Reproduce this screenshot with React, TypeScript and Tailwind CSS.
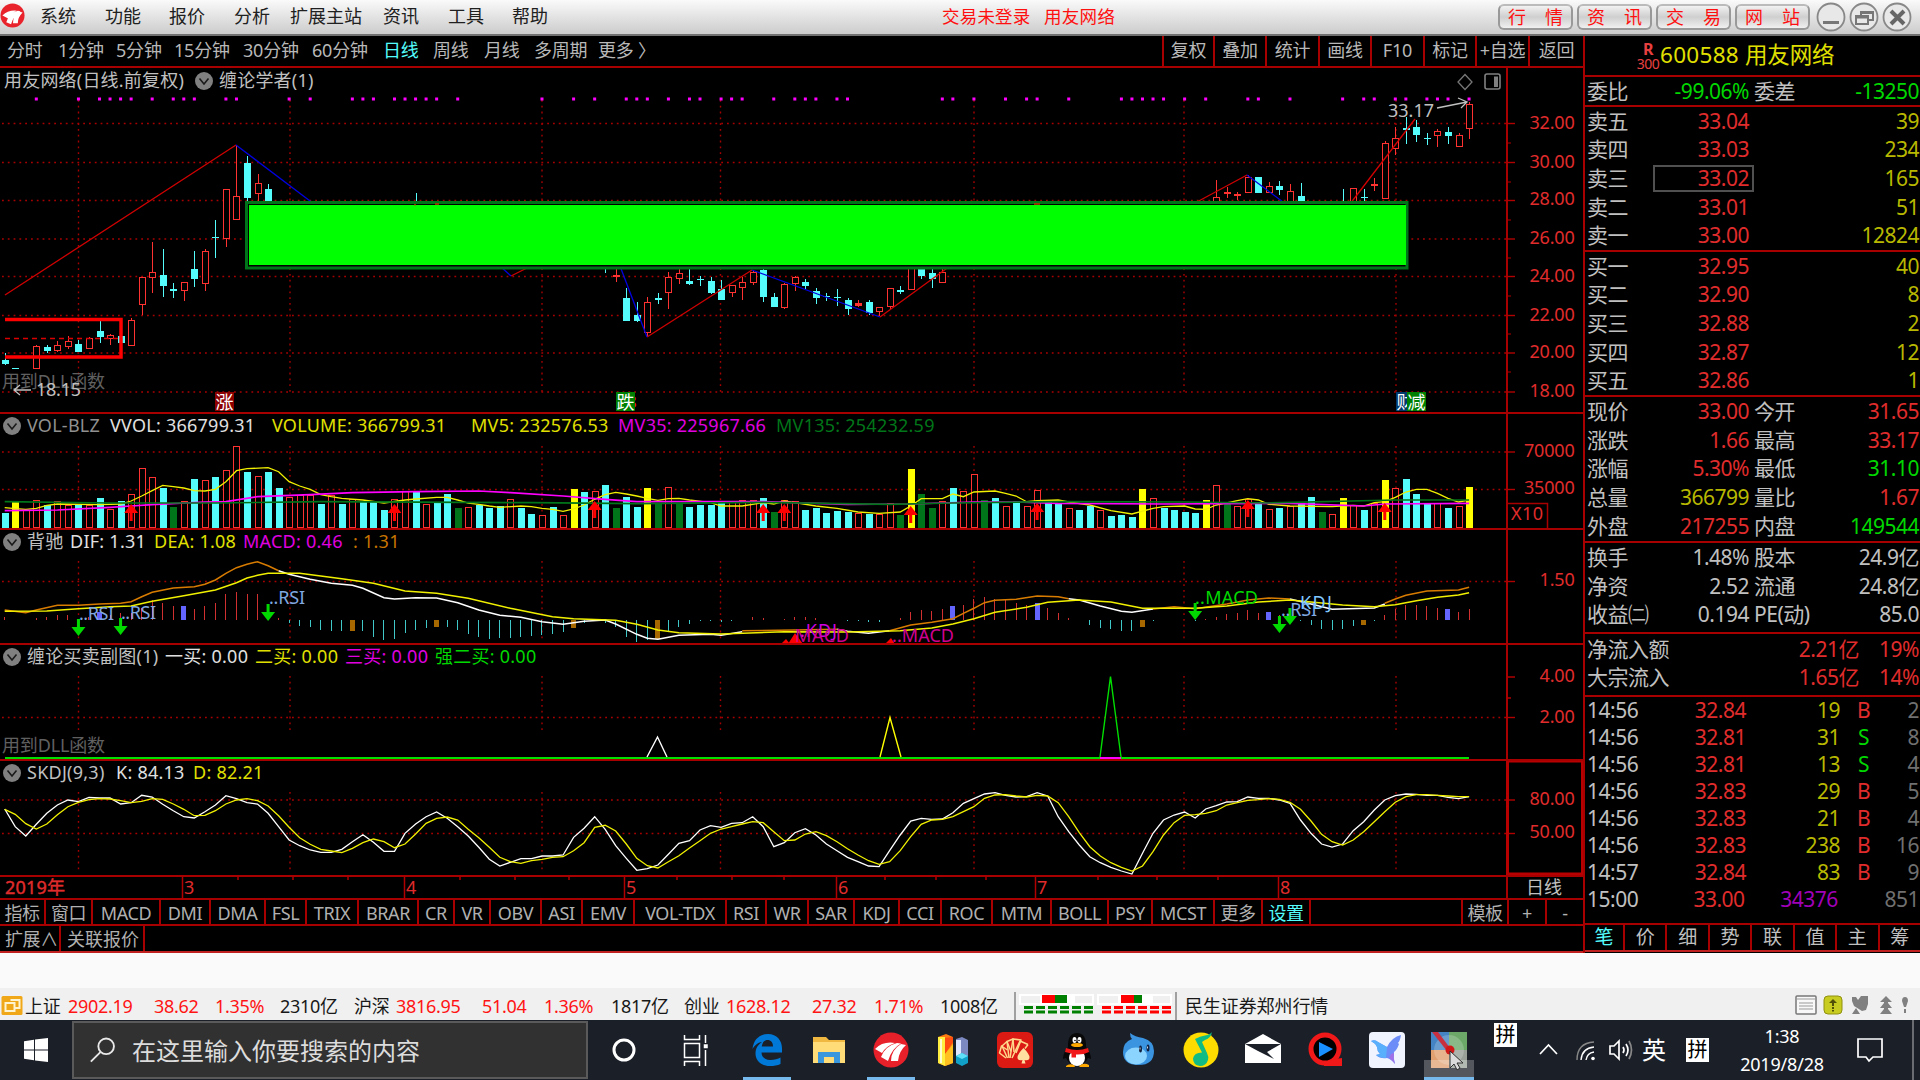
import type { ReactNode } from 'react'

type Pt = [number, number]
type Candle = [number, 'r' | 'c', number, number, number, number]

const RED = '#ff3232'
const CYAN = '#54fcfc'
const GREEN = '#007519'
const GRID = '#a80000'

// x of the n-th trading day
const day = (i: number) => 4.7 + i * 10.535

const MONTH_LINES = [78.5, 290, 542, 720.5, 974, 1184, 1396]

const MENUS = [
  ['系统', 'w-[65px]'], ['功能', 'w-[64px]'], ['报价', 'w-[65px]'], ['分析', 'w-[56px]'],
  ['扩展主站', 'w-[93px]'], ['资讯', 'w-[65px]'], ['工具', 'w-[64px]'], ['帮助', 'w-[430px]'],
]

const PERIODS = [
  ['分时', 'w-[51px]'], ['1分钟', 'w-[58px]'], ['5分钟', 'w-[58px]'], ['15分钟', 'w-[69px]'],
  ['30分钟', 'w-[69px]'], ['60分钟', 'w-[71px]'], ['日线', 'w-[50px] text-[#54fcfc]'], ['周线', 'w-[51px]'],
  ['月线', 'w-[50px]'], ['多周期', 'w-[64px]'], ['更多 〉', 'w-[60px]'],
]

const TOOLS = [
  ['复权', 'w-[51px]'], ['叠加', 'w-[52px]'], ['统计', 'w-[53px]'], ['画线', 'w-[52px]'],
  ['F10', 'w-[53px]'], ['标记', 'w-[52px]'], ['+自选', 'w-[53px]'], ['返回', 'w-[55px]'],
]

const INDICATORS = [
  ['指标', 'w-[46px]'], ['窗口', 'w-[47px]'], ['MACD', 'w-[68px]'], ['DMI', 'w-[50px]'], ['DMA', 'w-[55px]'],
  ['FSL', 'w-[41px]'], ['TRIX', 'w-[52px]'], ['BRAR', 'w-[60px]'], ['CR', 'w-[36px]'], ['VR', 'w-[36px]'],
  ['OBV', 'w-[51px]'], ['ASI', 'w-[41px]'], ['EMV', 'w-[52px]'], ['VOL-TDX', 'w-[92px]'], ['RSI', 'w-[40px]'],
  ['WR', 'w-[42px]'], ['SAR', 'w-[46px]'], ['KDJ', 'w-[45px]'], ['CCI', 'w-[42px]'], ['ROC', 'w-[51px]'],
  ['MTM', 'w-[59px]'], ['BOLL', 'w-[57px]'], ['PSY', 'w-[44px]'], ['MCST', 'w-[62px]'], ['更多', 'w-[48px]'],
  ['设置', 'w-[48px] text-[#54fcfc]'],
]

// day, colour, high, body top, body bottom, low
const CANDLES: Candle[] = [
  [0, 'c', 353, 360, 364, 365], [1, 'c', 368, 368, 369, 369], [3, 'r', 345, 346, 369, 369], [4, 'c', 345, 347, 351, 353],
  [5, 'r', 341, 345, 351, 352], [6, 'r', 336, 341, 347, 349], [7, 'c', 340, 344, 352, 352], [8, 'r', 337, 338, 349, 349],
  [9, 'c', 320, 331, 337, 343], [10, 'r', 334, 335, 339, 345], [11, 'c', 336, 336, 343, 343], [12, 'r', 318, 320, 346, 346],
  [13, 'r', 277, 277, 305, 315], [14, 'r', 242, 272, 278, 293], [15, 'c', 249, 275, 286, 297], [16, 'c', 283, 289, 291, 298],
  [17, 'r', 282, 282, 291, 301], [18, 'c', 251, 269, 279, 287], [19, 'r', 249, 251, 284, 291], [20, 'c', 220, 237, 238, 258],
  [21, 'r', 189, 189, 239, 247], [22, 'r', 145, 196, 220, 220], [23, 'c', 156, 163, 198, 203], [24, 'r', 174, 183, 194, 202],
  [25, 'c', 184, 189, 205, 205], [39, 'c', 193, 205, 205, 205], [57, 'c', 265, 265, 268, 273], [58, 'r', 267, 275, 277, 282],
  [59, 'c', 288, 298, 321, 321], [60, 'c', 302, 315, 321, 322], [61, 'r', 297, 302, 333, 337], [62, 'c', 293, 298, 300, 304],
  [63, 'r', 272, 277, 293, 309], [64, 'r', 265, 273, 279, 284], [65, 'c', 269, 281, 284, 285], [66, 'c', 276, 279, 280, 286],
  [67, 'c', 277, 281, 293, 294], [68, 'c', 280, 289, 300, 300], [69, 'r', 285, 285, 293, 297], [70, 'r', 277, 282, 288, 300],
  [71, 'r', 270, 272, 283, 285], [72, 'c', 269, 270, 297, 302], [73, 'c', 293, 297, 307, 307], [74, 'r', 283, 284, 308, 309],
  [75, 'r', 276, 277, 284, 291], [76, 'c', 279, 282, 286, 289], [77, 'c', 288, 291, 298, 304], [78, 'c', 293, 296, 297, 301],
  [79, 'c', 289, 297, 298, 306], [80, 'c', 298, 300, 309, 315], [81, 'r', 300, 303, 306, 307], [82, 'c', 300, 302, 313, 315],
  [83, 'r', 307, 307, 312, 316], [84, 'r', 288, 288, 307, 309], [85, 'c', 286, 290, 292, 294], [86, 'r', 265, 265, 290, 290],
  [87, 'c', 265, 269, 276, 279], [88, 'c', 268, 273, 279, 288], [89, 'r', 267, 272, 283, 283], [115, 'r', 180, 197, 205, 205],
  [116, 'r', 187, 192, 194, 198], [117, 'r', 192, 194, 196, 200], [118, 'r', 175, 177, 193, 193], [119, 'c', 177, 177, 193, 193],
  [120, 'r', 182, 186, 193, 193], [121, 'c', 181, 186, 190, 195], [122, 'r', 184, 191, 205, 205], [123, 'c', 183, 196, 205, 205],
  [127, 'c', 189, 202, 205, 205], [128, 'r', 188, 188, 205, 205], [129, 'c', 189, 197, 198, 201], [130, 'r', 178, 184, 186, 191],
  [131, 'r', 141, 143, 199, 199], [132, 'r', 127, 138, 149, 155], [133, 'c', 117, 128, 130, 144], [134, 'c', 120, 127, 135, 142],
  [135, 'c', 133, 138, 139, 145], [136, 'r', 129, 131, 136, 147], [137, 'c', 127, 132, 136, 144], [138, 'r', 133, 135, 147, 147],
  [139, 'r', 102, 104, 129, 139],
]

const SIGNAL_DAYS = [
  3, 7, 9, 10, 11, 12, 14, 16, 17, 18, 21, 22, 27, 29, 33, 34, 35, 37, 38, 39, 40, 41, 43, 51, 54, 56, 59, 60, 61, 63, 65,
  66, 68, 69, 70, 73, 75, 76, 77, 79, 80, 89, 90, 92, 95, 97, 98, 101, 106, 107, 108, 109, 110, 112, 114, 118, 119, 122,
  127, 129, 130, 132, 133, 135, 136, 137, 139,
]

// r hollow red, c cyan, y yellow, g green; the number is three times the depth below y=400
const VOLUME =
  'c340 y306 r330 r300 c314 r304 r314 c316 r314 c294 r326 c303 r282 r205 r232 c263 g321 r303 c236 r240 c232 r210 r138 c217 r227 ' +
  'c217 c263 r290 r286 r286 c311 r284 c311 r296 c304 c304 c330 r296 r272 c276 r313 c306 c281 g325 r322 c316 c325 c319 r296 c325 ' +
  'c343 r345 c322 r345 y266 c276 r272 c254 g325 c290 c322 y263 g308 r260 g308 c321 c316 c316 c308 r306 r300 r300 c294 g335 r300 ' +
  'r304 c330 c325 c339 c333 c337 r339 c342 r342 r308 g344 y208 g281 g325 r304 c263 r273 r223 g300 c294 r318 c303 r318 r271 c300 ' +
  'c310 r325 c330 c317 r331 c348 c344 c352 y267 r295 c325 c330 c335 c339 y300 r255 g308 r318 r298 c306 r327 c325 r317 c308 c290 ' +
  'g335 r341 y295 r316 c330 r310 y240 r264 c236 c281 c310 r310 c325 r318 y262'

const MV5: Pt[] = [
  [0, 323], [1, 326], [2, 328], [3, 325], [4, 316], [5, 312], [9, 314], [11, 312], [12, 303], [13, 288], [14, 272], [15, 256],
  [16, 260], [17, 264], [18, 272], [19, 273], [20, 268], [21, 245], [22, 212], [23, 206], [25, 203], [26, 215], [27, 245],
  [28, 258], [29, 268], [30, 284], [31, 290], [32, 295], [34, 300], [36, 309], [38, 300], [39, 297], [41, 292], [42, 292],
  [43, 300], [44, 309], [45, 313], [46, 318], [47, 322], [49, 318], [50, 320], [51, 325], [52, 328], [53, 334], [54, 327],
  [55, 315], [56, 298], [57, 284], [58, 277], [59, 282], [60, 288], [61, 295], [62, 301], [63, 296], [64, 295], [65, 300],
  [67, 308], [68, 318], [70, 318], [72, 308], [73, 312], [74, 303], [75, 308], [77, 318], [79, 325], [81, 336], [83, 340],
  [85, 336], [86, 318], [87, 296], [89, 296], [90, 282], [91, 290], [92, 276], [94, 273], [95, 280], [96, 288], [97, 305],
  [98, 302], [100, 300], [101, 306], [103, 315], [105, 332], [107, 342], [109, 325], [110, 320], [112, 318], [113, 327],
  [114, 328], [115, 315], [117, 302], [118, 296], [119, 300], [120, 313], [122, 318], [126, 320], [128, 316], [129, 318],
  [130, 308], [131, 305], [132, 292], [133, 276], [134, 268], [135, 268], [136, 280], [137, 295], [138, 306], [139, 300],
]
const MV35: Pt[] = [
  [0, 332], [5, 330], [10, 322], [12, 318], [14, 314], [19, 306], [21, 305], [24, 290], [29, 284], [33, 278], [39, 275],
  [45, 273], [48, 278], [53, 288], [57, 298], [60, 305], [72, 305], [80, 313], [86, 312], [92, 306], [96, 306], [100, 310],
  [110, 312], [122, 310], [129, 318], [131, 312], [139, 310],
]
const MV135: Pt[] = [
  [0, 305], [10, 309], [20, 309], [30, 305], [50, 308], [60, 311], [72, 307], [84, 313], [90, 309], [100, 305], [112, 306],
  [120, 309], [132, 300], [139, 300],
]

const DIF: { color: string; points: Pt[] }[] = [
  {
    color: '#d87c00',
    points: [
      [0, 630], [2, 638], [3, 630], [5, 616], [7, 616], [9, 612], [11, 610], [12, 605], [13, 590], [14, 577], [16, 564],
      [18, 560], [19, 553], [20, 540], [21, 520], [22, 503], [23, 493], [24, 485], [25, 497], [26, 512],
    ],
  },
  {
    color: '#ffffff',
    points: [
      [26, 512], [27, 523], [29, 538], [31, 550], [33, 556], [34, 565], [36, 593], [37, 597], [39, 593], [41, 594], [43, 608],
      [45, 630], [47, 646], [49, 652], [51, 665], [53, 673], [55, 664], [57, 660], [58, 672], [60, 703], [61, 715], [62, 718],
      [64, 706], [67, 703], [68, 706], [70, 695],
    ],
  },
  { color: '#d87c00', points: [[70, 692], [75, 690], [79, 688]] },
  { color: '#ffffff', points: [[79, 688], [80, 694], [82, 700], [84, 692]] },
  {
    color: '#d87c00',
    points: [
      [84, 692], [86, 675], [88, 667], [90, 656], [91, 640], [92, 625], [93, 608], [94, 601], [96, 598], [98, 588],
      [100, 590], [101, 596],
    ],
  },
  { color: '#ffffff', points: [[101, 596], [102, 600], [104, 618], [106, 634], [107, 637], [109, 627]] },
  { color: '#d87c00', points: [[109, 627], [111, 620], [113, 626], [116, 612], [118, 600], [120, 594], [122, 597]] },
  { color: '#ffffff', points: [[122, 597], [124, 612], [126, 628], [130, 624], [131, 612]] },
  { color: '#d87c00', points: [[131, 610], [132, 597], [133, 586], [135, 573], [138, 570], [139, 562]] },
]
const DEA: Pt[] = [
  [0, 634], [4, 633], [7, 626], [10, 620], [12, 618], [14, 604], [17, 587], [20, 570], [22, 548], [23, 534], [24, 526],
  [25, 520], [28, 520], [32, 536], [35, 550], [38, 573], [41, 580], [44, 595], [48, 625], [52, 650], [54, 656], [58, 661],
  [60, 673], [62, 690], [64, 698], [68, 702], [74, 695], [80, 696], [85, 692], [88, 684], [90, 672], [92, 656], [94, 637],
  [97, 622], [99, 607], [102, 600], [105, 606], [108, 625], [113, 625], [116, 618], [119, 606], [122, 600], [124, 606],
  [127, 615], [130, 620], [132, 614], [134, 602], [136, 592], [138, 585], [139, 578],
]
const HIST: Pt[] = [
  [0, 650], [3, 655], [4, 650], [5, 645], [6, 645], [8, 650], [9, 635], [10, 645], [11, 640], [12, 640], [13, 625], [14, 600],
  [15, 610], [16, 618], [17, 618], [18, 628], [19, 618], [20, 610], [21, 582], [22, 576], [23, 582], [24, 582], [26, 655],
  [27, 670], [28, 678], [29, 682], [30, 690], [31, 693], [32, 693], [33, 693], [34, 693], [35, 712], [36, 720], [37, 716],
  [38, 700], [39, 690], [40, 684], [41, 680], [42, 682], [43, 690], [44, 703], [45, 710], [46, 716], [47, 715], [48, 715],
  [49, 711], [50, 708], [51, 705], [52, 702], [53, 697], [54, 685], [55, 668], [56, 664], [57, 668], [58, 680], [59, 710],
  [60, 725], [61, 720], [62, 716], [63, 692], [64, 680], [65, 672], [66, 664], [67, 664], [68, 665], [69, 664], [71, 650],
  [72, 655], [74, 656], [75, 650], [76, 650], [77, 655], [80, 664], [81, 664], [82, 667], [83, 667], [85, 655], [86, 636],
  [87, 630], [88, 632], [89, 627], [90, 618], [91, 615], [92, 596], [93, 591], [94, 597], [95, 600], [96, 608], [97, 615],
  [98, 608], [99, 625], [100, 640], [101, 655], [103, 675], [104, 684], [105, 688], [106, 692], [107, 692], [108, 680],
  [109, 664], [113, 664], [114, 656], [115, 650], [116, 641], [117, 640], [118, 631], [119, 640], [120, 636], [121, 645],
  [123, 664], [124, 675], [125, 686], [126, 690], [127, 686], [128, 677], [129, 675], [130, 664], [131, 645], [132, 627],
  [133, 615], [134, 615], [135, 618], [136, 624], [137, 627], [138, 636], [139, 627],
]
const TURNING_DAYS = [9, 17, 33, 41, 54, 62, 90, 98, 108, 120, 129, 137]

const K_LINE = [
  507, 560, 588, 553, 520, 495, 480, 485, 472, 474, 474, 492, 488, 466, 471, 493, 512, 530, 534, 515, 495, 467, 476, 488, 492,
  520, 560, 600, 617, 630, 637, 637, 628, 605, 584, 607, 634, 634, 580, 552, 530, 516, 535, 560, 588, 622, 658, 678, 667, 656,
  656, 648, 648, 645, 592, 565, 530, 568, 617, 655, 691, 686, 675, 643, 610, 602, 570, 557, 562, 550, 548, 530, 560, 620, 608,
  578, 566, 585, 612, 632, 652, 665, 678, 680, 632, 585, 543, 535, 538, 537, 518, 490, 476, 462, 458, 466, 471, 470, 458, 468,
  530, 575, 615, 650, 668, 682, 693, 702, 640, 580, 540, 525, 516, 534, 507, 497, 486, 485, 471, 475, 475, 480, 490, 540, 580,
  612, 621, 612, 572, 545, 510, 480, 467, 462, 463, 466, 466, 472, 476, 470,
]
const D_LINE = [
  508, 523, 551, 567, 552, 524, 500, 487, 479, 476, 477, 482, 488, 484, 476, 478, 492, 508, 527, 526, 512, 492, 480, 476, 482,
  498, 527, 562, 593, 613, 628, 633, 638, 625, 608, 597, 605, 623, 612, 582, 550, 535, 531, 540, 568, 593, 622, 652, 665, 670,
  662, 658, 652, 650, 632, 608, 562, 556, 573, 612, 655, 677, 684, 665, 647, 624, 602, 580, 567, 560, 552, 545, 548, 575, 602,
  600, 582, 575, 587, 605, 626, 645, 662, 673, 665, 632, 590, 553, 540, 538, 530, 515, 500, 475, 465, 464, 468, 471, 466, 468,
  488, 530, 578, 620, 648, 668, 682, 693, 678, 635, 585, 548, 526, 524, 520, 512, 495, 488, 481, 479, 476, 478, 487, 508, 543,
  583, 605, 615, 600, 575, 545, 515, 487, 470, 464, 464, 466, 468, 470, 470,
]

const path = (pts: Pt[], top: number) => pts.map(([i, y]) => `${day(i).toFixed(1)},${(top + y / 3).toFixed(1)}`).join(' ')

function Line({ pts, top, color, width = 1.3 }: { pts: Pt[]; top: number; color: string; width?: number }) {
  return <polyline points={path(pts, top)} fill="none" stroke={color} strokeWidth={width} />
}

function Grid({ rows, from, to }: { rows: number[]; from: number; to: number }) {
  return (
    <g stroke={GRID} strokeWidth="1.4">
      {rows.map((y) => (
        <g key={y}>
          <line x1="2" x2="1507" y1={y} y2={y} strokeDasharray="1.8 4" />
          <line x1="1507" x2="1515" y1={y} y2={y} stroke="#b00000" />
        </g>
      ))}
      {MONTH_LINES.map((x) => (
        <line key={x} x1={x} x2={x} y1={from} y2={to} strokeDasharray="1.8 4" />
      ))}
    </g>
  )
}

function Axis({ labels }: { labels: [string, number][] }) {
  return (
    <g fill="#e02c2c" fontSize="18" textAnchor="end" letterSpacing="-0.2">
      {labels.map(([text, y]) => (
        <text key={text} x="1574.5" y={y + 6}>{text}</text>
      ))}
    </g>
  )
}

function Toggle() {
  return (
    <svg viewBox="0 0 18 18" className="h-[18px] w-[18px] shrink-0">
      <circle cx="9" cy="9" r="9" fill="#808080" />
      <path d="M4.5 6.5 9 12l4.500-5.500" fill="none" stroke="#1a1a1a" strokeWidth="1.6" />
    </svg>
  )
}

function Panel({ header, box, height, children }: { header: string[][]; box: string; height: string; children: ReactNode }) {
  return (
    <section className="relative border-b-2 border-[#a80000]">
      <div className="absolute top-[-1px] left-[3px] flex h-[25px] items-center text-[18px] tracking-[0.25px] whitespace-nowrap">
        <Toggle />
        <div className="w-[6px]" />
        {header.map(([text, cls]) => (
          <span key={text} className={cls}>{text}</span>
        ))}
      </div>
      <svg viewBox={box} className={`block w-[1583px] ${height}`}>
        <line x1="1507" x2="1507" y1="0" y2="1000" stroke="#a80000" strokeWidth="2" />
        {children}
      </svg>
    </section>
  )
}

function Arrow({ x, y, down }: { x: number; y: number; down?: boolean }) {
  return down ? (
    <path d={`M${x - 1.500} ${y - 17}h3v8h5.500l-7 9-7-9h5.500z`} fill="#00d800" />
  ) : (
    <path d={`M${x} ${y}l-7 9h5.500v8h3v-8h5.500z`} fill="#ff0000" />
  )
}

function Badge({ x, fill, text }: { x: number; fill: string; text: string }) {
  return (
    <g>
      <rect x={x} y="392" width="19" height="19" fill={fill} />
      <text x={x + 0.5} y="408.500" fontSize="18" fill="#fff">{text}</text>
    </g>
  )
}

function PriceChart() {
  return (
    <section className="relative border-b-2 border-[#a80000]">
      <div className="absolute top-[-1px] left-[4px] flex h-[27px] items-center text-[18px] tracking-[0.2px] whitespace-nowrap text-[#c0c0c0]">
        <span className="w-[191px]">用友网络(日线.前复权)</span>
        <Toggle />
        <span className="ml-[6px]">缠论学者(1)</span>
      </div>
      <svg viewBox="0 68 1583 344" className="block h-[344px] w-[1583px]">
        <line x1="1507" x2="1507" y1="68" y2="412" stroke="#a80000" strokeWidth="2" />
        <Grid rows={[123.5, 162.5, 200.5, 239, 276.5, 315.5, 353, 392]} from={100} to={392} />
        {[143, 182, 220, 258, 296, 334, 372].map((y) => (
          <line key={y} x1="1507" x2="1511" y1={y} y2={y} stroke="#b00000" />
        ))}
        <Axis
          labels={[['32.00', 123], ['30.00', 162], ['28.00', 199], ['26.00', 238], ['24.00', 276], ['22.00', 315], ['20.00', 352], ['18.00', 391]]}
        />
        {SIGNAL_DAYS.map((i) => (
          <rect key={i} x={day(i) - 1.5} y="97.500" width="3" height="3" fill="#ff00ff" />
        ))}
        <g shapeRendering="crispEdges">
          {CANDLES.map(([i, c, high, top, bottom, low]) => {
            const x = Math.round(day(i))
            const color = c === 'r' ? RED : CYAN
            const solid = c === 'c' || bottom - top < 4
            return (
              <g key={i} stroke={color}>
                <line x1={x + 0.5} x2={x + 0.5} y1={high} y2={low} />
                {solid ? (
                  <rect x={x - 3} y={top} width="7" height={bottom - top} fill={color} stroke="none" />
                ) : (
                  <rect x={x - 2.5} y={top + 0.5} width="6" height={bottom - top - 1} fill="#000" />
                )}
              </g>
            )
          })}
        </g>
        <g fill="none" stroke="#d00000" strokeWidth="1.3">
          <path d="M5 295 236 145M647 337 752 270M880 317 950 266M1195 203 1247 175M1350 204 1415 119M511 276 531 266M393 265 398 268" />
          <path d="M236 145 314 204M620 266 647 337M752 270 880 317M1247 175 1287 205M500 266 511 276M388 264 394 267" stroke="#0000e0" />
        </g>
        <g fill="none" stroke="#ff0000">
          <path d="M5 319.500H121V357H5" strokeWidth="3.500" />
          <path d="M5 338.500H120" strokeWidth="1.500" strokeDasharray="5 4" stroke="#d80000" />
        </g>
        <rect x="246.500" y="202.500" width="1160.500" height="65.500" fill="#000" stroke={GREEN} strokeWidth="3" />
        <rect x="249" y="205" width="1157" height="60" fill="#00ff00" />
        <path d="M415 204v1.500M435 204h4M1034 204h6" stroke="#c03000" strokeWidth="1.500" />
        <g fontSize="18">
          <text x="2" y="388" fill="#606060" textLength="103">用到DLL函数</text>
          <text x="36" y="396" fill="#c0c0c0" textLength="45">18.15</text>
          <path d="M31 390H14m6-5-6 5 6 5" fill="none" stroke="#c0c0c0" strokeWidth="1.300" />
          <text x="1388" y="117" fill="#c0c0c0" textLength="46">33.17</text>
          <path d="M1437 108 1467 102m-9-4 9 4-6 6" fill="none" stroke="#c0c0c0" strokeWidth="1.300" />
        </g>
        <text x="627" y="408" fontSize="17" fill="#ff2020">8</text>
        <Badge x={215} fill="#8c0000" text="涨" />
        <Badge x={616} fill="#008000" text="跌" />
        <Badge x={1396} fill="#003a6c" text="财" />
        <Badge x={1407} fill="#008000" text="减" />
        <path d="M1465 74.500 1472 82l-7 7.500-7-7.500z" fill="none" stroke="#777" strokeWidth="1.300" />
        <rect x="1485" y="74" width="15" height="15" rx="2" fill="none" stroke="#808080" strokeWidth="1.600" />
        <rect x="1494" y="76.500" width="4" height="10.500" fill="#808080" />
      </svg>
    </section>
  )
}

function VolumePanel() {
  const fills: Record<string, string> = { c: CYAN, y: '#ffff00', g: GREEN }
  return (
    <Panel
      box="0 414 1583 114"
      height="h-[114px]"
      header={[
        ['VOL-BLZ', 'w-[83px] text-[#909090]'], ['VVOL: 366799.31', 'w-[162px] text-[#e0e0e0]'],
        ['VOLUME: 366799.31', 'w-[199px] text-[#e0e000]'], ['MV5: 232576.53', 'w-[147px] text-[#e0e000]'],
        ['MV35: 225967.66', 'w-[158px] text-[#e000e0]'], ['MV135: 254232.59', 'text-[#007519]'],
      ]}
    >
      <Grid rows={[452, 489.5]} from={446} to={528} />
      <Axis labels={[['70000', 451], ['35000', 488]]} />
      <g shapeRendering="crispEdges">
        {VOLUME.split(' ').map((v, i) => {
          const x = Math.round(day(i))
          const top = Math.round(400 + Number(v.slice(1)) / 3)
          return v[0] === 'r' ? (
            <rect key={i} x={x - 2.5} y={top + 0.5} width="6" height={527 - top} fill="#000" stroke={RED} />
          ) : (
            <rect key={i} x={x - 3} y={top} width="7" height={528 - top} fill={fills[v[0]]} />
          )
        })}
      </g>
      <Line pts={MV5} top={400} color="#f0f000" />
      <Line pts={MV35} top={400} color="#ff00ff" width={1.7} />
      <Line pts={MV135} top={400} color="#007519" width={1.7} />
      {[[12, 504], [37, 504], [56, 501], [72, 504], [74, 504], [86, 506], [98, 503], [118, 500], [131, 503]].map(([i, y]) => (
        <Arrow key={i} x={day(i)} y={y} />
      ))}
      <path d="M1507 503.500H1547.500V528" fill="none" stroke="#a80000" strokeWidth="1.500" />
      <text x="1511" y="520" fontSize="18" fill="#e02c2c" textLength="32">X10</text>
    </Panel>
  )
}

function MacdPanel() {
  return (
    <Panel
      box="0 530 1583 113"
      height="h-[113px]"
      header={[
        ['背驰', 'w-[43px] text-[#c0c0c0]'], ['DIF: 1.31', 'w-[84px] text-[#e0e0e0]'], ['DEA: 1.08', 'w-[89px] text-[#e0e000]'],
        ['MACD: 0.46', 'w-[110px] text-[#e000e0]'], [': 1.31', 'text-[#c87400]'],
      ]}
    >
      <Grid rows={[581.5]} from={561} to={642} />
      <Axis labels={[['1.50', 580]]} />
      <g shapeRendering="crispEdges">
        {HIST.map(([i, y]) => {
          const end = 400 + y / 3
          const up = end < 620
          const turn = TURNING_DAYS.includes(i)
          const w = turn ? 5 : 1
          const color = up ? (turn ? '#6464ff' : '#d03030') : turn ? '#a86800' : '#40c8c8'
          return <rect key={i} x={Math.round(day(i) - w / 2)} y={up ? end : 620} width={w} height={Math.abs(end - 620)} fill={color} />
        })}
      </g>
      {DIF.map((seg, n) => (
        <Line key={n} pts={seg.points} top={400} color={seg.color} width={1.5} />
      ))}
      <Line pts={DEA} top={400} color="#f0f000" width={1.5} />
      {[[7, 636], [11, 635], [25, 621], [113, 620], [121, 633], [122, 625]].map(([i, y]) => (
        <Arrow key={i} x={day(i)} y={y} down />
      ))}
      <path d="M781 644l5-5 4 5zM788 644l7-11 8 11zM885 644l6-6 4 6z" fill="#ff0000" />
      <g fontSize="18" fill="#80a8e0">
        <text x="79" y="620" textLength="35">..RSI</text>
        <text x="121" y="619" textLength="35">..RSI</text>
        <text x="269" y="604" textLength="36">..RSI</text>
        <text x="1281" y="616" textLength="36">..RSI</text>
        <text x="1300" y="609" textLength="32" fill="#80c8ff">KDJ</text>
        <text x="1195" y="604" textLength="63" fill="#00d800">..MACD</text>
        <text x="800" y="637" textLength="37" fill="#d000e0">.KDJ</text>
        <text x="795" y="642" textLength="54" fill="#d00090">MACD</text>
        <text x="892" y="642" textLength="62" fill="#d00090">..MACD</text>
      </g>
    </Panel>
  )
}

function ChanPanel() {
  return (
    <Panel
      box="0 645 1583 114"
      height="h-[114px]"
      header={[
        ['缠论买卖副图(1)', 'w-[138px] text-[#c0c0c0]'], ['一买: 0.00', 'w-[90px] text-[#e0e0e0]'],
        ['二买: 0.00', 'w-[90px] text-[#e0e000]'], ['三买: 0.00', 'w-[90px] text-[#e000e0]'], ['强二买: 0.00', 'text-[#00d800]'],
      ]}
    >
      <Grid rows={[717.5]} from={676} to={732} />
      <path d="M1507 677h8M1507 698h4" stroke="#b00000" strokeWidth="1.400" />
      <Axis labels={[['4.00', 676], ['2.00', 717]]} />
      <text x="2" y="752" fontSize="18" fill="#606060" textLength="103">用到DLL函数</text>
      <line x1="5" x2="1469" y1="758" y2="758" stroke="#00e000" strokeWidth="2" />
      <line x1="1100" x2="1121" y1="758" y2="758" stroke="#ff00ff" strokeWidth="2" />
      <g fill="none" strokeWidth="1.400">
        <path d="M647 757 657.500 737 667 757" stroke="#fff" />
        <path d="M880 757 890 717.500 901 757" stroke="#ffff00" />
        <path d="M1100 757 1110.500 676.500 1121 757" stroke="#00e000" />
      </g>
    </Panel>
  )
}

function SkdjPanel() {
  return (
    <Panel
      box="0 761 1583 114"
      height="h-[114px]"
      header={[
        ['SKDJ(9,3)', 'w-[89px] text-[#c0c0c0]'], ['K: 84.13', 'w-[77px] text-[#e0e0e0]'], ['D: 82.21', 'text-[#e0e000]'],
      ]}
    >
      <Grid rows={[800, 833.5]} from={792} to={872} />
      <Line pts={K_LINE.map((y, i): Pt => [i, y])} top={640} color="#ffffff" />
      <Line pts={D_LINE.map((y, i): Pt => [i, y])} top={640} color="#f0f000" />
      <rect x="1507.500" y="761" width="75" height="113" fill="none" stroke="#b80000" strokeWidth="3" />
      <Axis labels={[['80.00', 799], ['50.00', 832]]} />
    </Panel>
  )
}

function TimeAxis() {
  const months: [string, number][] = [['3', 182], ['4', 404], ['5', 624], ['6', 836], ['7', 1035], ['8', 1278]]
  const ticks = [238, 293, 348, 460, 515, 569, 677, 732, 784, 885, 936, 986, 1098, 1157, 1218]
  return (
    <svg
      viewBox="0 877 1583 21"
      className="box-content block h-[21px] w-[1583px] overflow-visible border-b-2 border-[#a80000]"
      fill="#e02c2c"
      fontSize="18"
    >
      <text x="5" y="894" textLength="60" stroke="#e02c2c" strokeWidth="0.400">2019年</text>
      {months.map(([m, x]) => (
        <g key={m}>
          <line x1={x + 0.5} x2={x + 0.5} y1="877" y2="898" stroke="#b00000" strokeWidth="1.500" />
          <text x={x + 2} y="894">{m}</text>
        </g>
      ))}
      {ticks.map((x) => (
        <line key={x} x1={x} x2={x} y1="877" y2="880" stroke="#b00000" strokeWidth="1.500" />
      ))}
      <line x1="1507" x2="1507" y1="877" y2="898" stroke="#a80000" strokeWidth="2" />
      <text x="1526" y="894" fill="#c0c0c0">日线</text>
    </svg>
  )
}

function TitleBar() {
  return (
    <header className="flex h-[36px] shrink-0 items-center border-b-2 border-[#707070] bg-gradient-to-b from-[#fafafa] to-[#cccccc] text-[18px] text-[#202020]">
      <svg viewBox="0 0 26 26" className="mb-[4px] h-[25px] w-[26px]">
        <circle cx="12.500" cy="13" r="12.500" fill="#e8232b" />
        <path d="M2 13Q8 7 17 8q-6 2-9 8zM6 20Q9 10 18 8l3 .5Q14 12 11 22zM13 21Q13 13 20 9l3 1q-5 5-5 11z" fill="#fff" />
      </svg>
      <div className="flex h-full pt-[3px] pl-[14px] whitespace-nowrap">
        {MENUS.map(([label, w]) => (
          <span key={label} className={w}>{label}</span>
        ))}
        <span className="w-[102px] text-[17.500px] tracking-[0.2px] text-[#ff1010]">交易未登录</span>
        <span className="w-[454px] text-[17.500px] tracking-[0.3px] text-[#ff1010]">用友网络</span>
      </div>
      <div className="flex gap-[4px]">
        {['行情', '资讯', '交易', '网站'].map((label) => (
          <div
            key={label}
            className="flex h-[26px] w-[75px] items-center justify-between rounded-[6px] border-2 border-[#999] border-t-[#bbb] bg-gradient-to-b from-[#f2f2f2] via-[#cfcfcf] to-[#f0f0f0] px-[8px] text-[18px] leading-none text-[#ff1010]"
          >
            <span>{label[0]}</span>
            <span>{label[1]}</span>
          </div>
        ))}
      </div>
      <svg viewBox="0 0 102 32" className="ml-[5px] h-[32px] w-[102px]" fill="none" stroke="#888" strokeWidth="1.800">
        <g fill="#e8e8e8">
          <circle cx="16" cy="16" r="13.500" />
          <circle cx="49" cy="16" r="13.500" />
          <circle cx="82" cy="16" r="13.500" />
        </g>
        <path d="M8 21.500h16" stroke="#777" strokeWidth="3" />
        <path d="M46 14v-3h12v8h-4M41 15h12v8H41zM41 16.500h12M46 12h12" stroke="#777" strokeWidth="2" />
        <path d="m76 10 13 13m0-13-13 13" stroke="#666" strokeWidth="4" />
      </svg>
    </header>
  )
}

function Toolbar() {
  return (
    <div className="flex h-[32px] justify-between border-b-2 border-[#a80000] text-[18px] leading-[29px] tracking-[-0.2px] whitespace-nowrap text-[#b8b8b8]">
      <div className="flex pl-[7px]">
        {PERIODS.map(([label, cls]) => (
          <span key={label} className={cls}>{label}</span>
        ))}
      </div>
      <div className="flex">
        {TOOLS.map(([label, cls]) => (
          <span key={label} className={`border-l-2 border-[#a80000] text-center ${cls}`}>{label}</span>
        ))}
      </div>
    </div>
  )
}

function IndicatorTabs() {
  return (
    <div className="text-[18px] leading-[26px] tracking-[-0.4px] whitespace-nowrap text-[#b0b0b0]">
      <div className="flex h-[26px] border-b-2 border-[#a80000]">
        {INDICATORS.map(([label, cls]) => (
          <span key={label} className={`border-r-2 border-[#a80000] text-center ${cls}`}>{label}</span>
        ))}
        <span className="flex-1" />
        <span className="w-[46px] border-l-2 border-[#a80000] text-center">模板</span>
        <span className="w-[38px] border-l-2 border-[#a80000] text-center">+</span>
        <span className="w-[38px] border-l-2 border-[#a80000] text-center">-</span>
      </div>
      <div className="flex h-[27px] border-b-2 border-[#c02020]">
        <span className="w-[61px] border-r-2 border-[#a80000] pl-[5px]">扩展∧</span>
        <span className="w-[84px] border-r-2 border-[#a80000] pl-[6px] tracking-normal">关联报价</span>
      </div>
    </div>
  )
}

const SELLS = [['卖五', '33.04', '39'], ['卖四', '33.03', '234'], ['卖三', '33.02', '165'], ['卖二', '33.01', '51'], ['卖一', '33.00', '12824']]
const BUYS = [['买一', '32.95', '40'], ['买二', '32.90', '8'], ['买三', '32.88', '2'], ['买四', '32.87', '12'], ['买五', '32.86', '1']]

const R = 'text-[#e02c2c]'
const G = 'text-[#00d800]'
const Y = 'text-[#b8b800]'
const W = 'text-[#c0c0c0]'

const QUOTE = [
  ['现价', '33.00', R, '今开', '31.65', R],
  ['涨跌', '1.66', R, '最高', '33.17', R],
  ['涨幅', '5.30%', R, '最低', '31.10', G],
  ['总量', '366799', Y, '量比', '1.67', R],
  ['外盘', '217255', R, '内盘', '149544', G],
]
const CAPITAL = [
  ['换手', '1.48%', W, '股本', '24.9亿', W],
  ['净资', '2.52', W, '流通', '24.8亿', W],
  ['收益㈡', '0.194', W, 'PE(动)', '85.0', W],
]
const TICKS = [
  ['14:56', '32.84', '19', 'B', '2'],
  ['14:56', '32.81', '31', 'S', '8'],
  ['14:56', '32.81', '13', 'S', '4'],
  ['14:56', '32.83', '29', 'B', '5'],
  ['14:56', '32.83', '21', 'B', '4'],
  ['14:56', '32.83', '238', 'B', '16'],
  ['14:57', '32.84', '83', 'B', '9'],
  ['15:00', '33.00', '34376', '', '851'],
]

function QuoteRow({ row }: { row: string[] }) {
  return (
    <div className="flex h-[28.600px] items-center">
      <span className="w-[66px]">{row[0]}</span>
      <span className={`w-[96px] text-right ${row[2]}`}>{row[1]}</span>
      <span className="w-[70px] pl-[5px]">{row[3]}</span>
      <span className={`flex-1 text-right ${row[5]}`}>{row[4]}</span>
    </div>
  )
}

function OrderRow({ row, boxed }: { row: string[]; boxed?: boolean }) {
  return (
    <div className="flex h-[28.600px] items-center">
      <span className="w-[66px]">{row[0]}</span>
      <span
        className={`flex h-[27px] w-[101px] items-center justify-end border-2 pr-[3px] text-[#e02c2c] ${boxed ? 'border-[#505050]' : 'border-transparent'}`}
      >
        {row[1]}
      </span>
      <span className="flex-1 text-right text-[#b8b800]">{row[2]}</span>
    </div>
  )
}

const SECTION = 'border-b-2 border-[#a80000] pl-[2px] pr-[1px]'

function QuotePanel() {
  return (
    <aside className="flex w-[337px] flex-col border-l-2 border-[#a80000] text-[21px] leading-none tracking-[-0.5px] whitespace-nowrap text-[#c0c0c0]">
      <div className="flex h-[41px] items-center border-b-2 border-[#a80000] pl-[51px]">
        <div className="flex w-[24px] flex-col items-center text-[14px] text-[#e84040]">
          <span className="text-[16px] font-bold">R</span>
          <span>300</span>
        </div>
        <span className="flex gap-[6px] text-[22.500px] tracking-[0.3px] text-[#e0e000]">
          <span>600588</span>
          <span className="tracking-[-0.2px]">用友网络</span>
        </span>
      </div>
      <div className={`h-[30px] ${SECTION}`}>
        <QuoteRow row={['委比', '-99.06%', G, '委差', '-13250', G]} />
      </div>
      <div className={`h-[145px] ${SECTION}`}>
        {SELLS.map((r) => <OrderRow key={r[0]} row={r} boxed={r[0] === '卖三'} />)}
      </div>
      <div className={`h-[145px] ${SECTION}`}>
        {BUYS.map((r) => <OrderRow key={r[0]} row={r} />)}
      </div>
      <div className={`h-[146px] pt-[0.500px] ${SECTION}`}>
        {QUOTE.map((r) => <QuoteRow key={r[0]} row={r} />)}
      </div>
      <div className={`h-[91px] pt-[0.500px] ${SECTION}`}>
        {CAPITAL.map((r) => <QuoteRow key={r[0]} row={r} />)}
      </div>
      <div className={`h-[63px] pt-px ${SECTION}`}>
        {[['净流入额', '2.21亿', '19%'], ['大宗流入', '1.65亿', '14%']].map((r) => (
          <div key={r[0]} className="flex h-[28.600px] items-center">
            <span>{r[0]}</span>
            <span className="flex-1 text-right text-[#e02c2c]">{r[1]}</span>
            <span className="w-[60px] text-right text-[#e02c2c]">{r[2]}</span>
          </div>
        ))}
      </div>
      <div className={`h-[228px] ${SECTION}`}>
        {TICKS.map(([time, price, vol, side, count], i) => (
          <div key={i} className="flex h-[27px] items-center">
            <span className="w-[60px]">{time}</span>
            <span className="w-[99px] text-right text-[#e02c2c]">{price}</span>
            <span className={`w-[94px] text-right ${side ? 'text-[#b8b800]' : 'text-[#a000b8]'}`}>{vol}</span>
            <span className={`w-[47px] text-center ${side === 'S' ? 'text-[#00d800]' : 'text-[#e02c2c]'}`}>{side}</span>
            <span className="flex-1 text-right text-[#707070]">{count}</span>
          </div>
        ))}
      </div>
      <div className="flex h-[27px] border-b-2 border-[#c02020] text-center text-[19px] leading-[25px] tracking-normal">
        <span className="w-[38px] text-[#54fcfc]">笔</span>
        {['价', '细', '势', '联', '值', '主', '筹'].map((c) => (
          <span key={c} className="flex-1 border-l-2 border-[#a80000]">{c}</span>
        ))}
      </div>
    </aside>
  )
}

const INDEXES = [
  ['上证', 'w-[43px]'], ['2902.19', 'w-[86px] text-[#ff1414]'], ['38.62', 'w-[61px] text-[#ff1414]'],
  ['1.35%', 'w-[65px] text-[#ff1414]'], ['2310亿', 'w-[74px]'], ['沪深', 'w-[42px]'], ['3816.95', 'w-[86px] text-[#ff1414]'],
  ['51.04', 'w-[62px] text-[#ff1414]'], ['1.36%', 'w-[67px] text-[#ff1414]'], ['1817亿', 'w-[73px]'], ['创业', 'w-[42px]'],
  ['1628.12', 'w-[86px] text-[#ff1414]'], ['27.32', 'w-[62px] text-[#ff1414]'], ['1.71%', 'w-[66px] text-[#ff1414]'],
  ['1008亿', 'w-[74px]'],
]

function Meter({ color, split, end }: { color: string; split: number; end: number }) {
  return (
    <svg viewBox="0 0 75 32" className="mr-[3px] h-[32px] w-[75px]">
      <rect width="75" height="11" y="6" fill="#fff" />
      <path d="M2 8h19v7H2zM56 8h17v7H56z" fill="#f0f0f0" />
      <rect x={split - 13} width="13" height="8" y="7" fill="#ff0000" />
      <rect x={split} width={end - split} height="8" y="7" fill="#008000" />
      {[0, 1, 2, 3, 4, 5].map((n) => (
        <path key={n} d={`M${5 + n * 12} 18h9v3h-9zM${5 + n * 12} 22.500h9v3h-9z`} fill={color} />
      ))}
    </svg>
  )
}

function StatusBar() {
  return (
    <div className="flex h-[32px] shrink-0 items-center bg-[#f0f0f0] text-[18px] tracking-[-0.3px] whitespace-nowrap text-[#181818]">
      <svg viewBox="0 0 24 22" className="mt-[3px] h-[22px] w-[25px]">
        <rect x="1" y="1" width="21" height="19" rx="1.500" fill="#f0a818" />
        <path d="M10 5h9v8h-4M5 8h9v8H5z" fill="none" stroke="#fff4d0" strokeWidth="2" />
      </svg>
      {INDEXES.map(([t, cls]) => (
        <span key={t} className={`pt-[5px] ${cls}`}>{t}</span>
      ))}
      <div className="mr-[3px] h-[28px] w-[2px] self-end bg-[#a0a0a0]" />
      <Meter color="#008000" split={36} end={48} />
      <Meter color="#ff0000" split={37} end={45} />
      <div className="mr-[8px] h-[28px] w-[2px] self-end bg-[#a0a0a0]" />
      <span className="flex-1 pt-[5px] tracking-[-0.1px]">民生证券郑州行情</span>
      <svg viewBox="0 0 125 22" className="mt-px h-[22px] w-[125px]">
        <rect x="1" y="2" width="20" height="18" rx="1" fill="#f8f8f8" stroke="#777" strokeWidth="1.500" />
        <path d="M1 5h20M4 9h14M4 12h14M4 15h14" stroke="#999" />
        <rect x="29" y="2" width="18" height="18" rx="4" fill="#c8cc20" stroke="#909010" />
        <path d="m38 5-4 4h3v3h2V9h3zM37 13h2v2h-2zM37 16h2v1.500h-2z" fill="#505008" />
        <path d="M57 3h4l2 3 3-4h7v8l-2 6-4 1-8-5-2-5zM61 14l-4 6h8z" fill="#808080" />
        <path d="m91 2-6 6h4v1l-4 5h4v1l-4 5h12l-4-5v-1h4l-4-5V8h4z" fill="#808080" />
        <path d="M110 3q3 0 3 4l-2 6h-2l-2-6q0-4 3-4zM109 15h2v4h-2z" fill="#808080" />
      </svg>
    </div>
  )
}

function Slot({ children, active }: { children: ReactNode; active?: boolean }) {
  return (
    <div className="relative flex h-full w-[62px] items-center justify-center">
      <svg viewBox="0 0 36 36" className="h-[36px] w-[36px]">{children}</svg>
      {active && <div className="absolute inset-x-[7px] bottom-0 h-[3px] bg-[#76b9ed]" />}
    </div>
  )
}

function TaskBar() {
  return (
    <footer className="flex h-[60px] shrink-0 items-stretch bg-[#1b1f28] text-white">
      <div className="flex w-[72px] items-center justify-center">
        <svg viewBox="0 0 24 24" className="h-[24px] w-[24px]" fill="#fff">
          <path d="M0 3.200 10 1.700V11.500H0zM11 1.600 24 0v11.500H11zM0 12.500h10v9.800L0 20.800zM11 12.500h13V24l-13-1.600z" />
        </svg>
      </div>
      <div className="my-px flex w-[516px] items-center border-2 border-[#5a5a5a] bg-[#313131] pl-[16px]">
        <svg viewBox="0 0 24 24" className="h-[26px] w-[25px]" fill="none" stroke="#e8e8e8" strokeWidth="1.800">
          <circle cx="15.500" cy="8.500" r="7.500" />
          <path d="M10 14 .8 23.200" />
        </svg>
        <span className="pt-[2px] pl-[17px] text-[24px] leading-none text-[#dcdcdc]">在这里输入你要搜索的内容</span>
      </div>
      <div className="flex w-[72px] items-center justify-center">
        <svg viewBox="0 0 24 24" className="h-[24px] w-[24px]" fill="none" stroke="#fff" strokeWidth="3">
          <circle cx="12" cy="12" r="10" />
        </svg>
      </div>
      <div className="flex w-[76px] items-center justify-center pr-[4px]">
        <svg viewBox="0 0 26 31" className="h-[31px] w-[26px]" fill="none" stroke="#fff" strokeWidth="1.500">
          <path d="M1.500 0v4.500h15V0M1.500 8.500h15v14h-15zM1.500 31v-4.500h15V31M22.500 0v8M22.500 15v16" />
          <rect x="21.500" y="10" width="2.500" height="2.500" fill="#fff" />
        </svg>
      </div>
      <Slot active>
        <path
          d="M3.500 17C4.500 7.500 10.500 2 19 2c9 0 14 6.500 14 14.500v4H12.500c.3 5 4 7.500 9 7.500 4 0 7.500-1 10-2.500v6.500c-3 1.500-6.500 2-10.500 2C12 34 6.500 28.500 6.500 21.500c0-5 2.500-9 6.500-11.500-4.500.5-7.500 3.500-9.500 7zm9.300-2.500H24c0-4-2-6.500-5.500-6.500s-5.200 3-5.700 6.500z"
          fill="#0078d7"
        />
      </Slot>
      <Slot>
        <path d="M2 5h13l3 3h16v23H2z" fill="#f0b840" />
        <path d="M2 10h32v21H2z" fill="#ffdc78" />
        <path d="M7 31V20h22v11h-6v-6H13v6z" fill="#3a96dd" />
      </Slot>
      <Slot active>
        <circle cx="18" cy="18" r="17.500" fill="#e8202a" />
        <path d="M2 17Q10 9 22 11 13 14 9 21zM8 25Q12 14 24 11l4 .5Q19 16 15 29zM18 29Q18 18 28 12l5 1q-7 6-8 16z" fill="#fff" />
      </Slot>
      <Slot>
        <path d="m3 5 8-3 7 3v26l-8 3-7-3z" fill="#ff7a10" />
        <path d="M3 5h7v29l-7-3z" fill="#ffee40" />
        <path d="M5 7h2v24H5z" fill="#fffbd0" />
        <path d="m10 6 8-1v5l-8 12z" fill="#ff4a10" />
        <path d="M10 22l8-10v19l-8 3z" fill="#ffc020" />
        <path d="m21 7 6-2 6 3v20H21z" fill="#7c88c0" />
        <path d="M21 8h5v20h-5z" fill="#dfe6ff" />
        <path d="m27 21 6 3v7l-6 3-6-3v-7z" fill="#10a0c8" />
        <path d="m27 21 6 3-6 3-6-3z" fill="#60e0f8" />
      </Slot>
      <Slot>
        <rect width="36" height="36" rx="6" fill="#dc1a14" />
        <g fill="none" stroke="#ffd88c" strokeWidth="1.500" strokeLinejoin="round">
          <path d="M9 26 2.500 21l2-7 6 4" />
          <path d="M10.500 26 5 14l5-4.500 4 10" />
          <path d="M12 26 10 9.500 16 7l1 13" />
          <path d="M13 26 16 7l8 1-5 13" />
          <path d="M15 26 23 9l8 3.500M31 12.500l-3 4" />
        </g>
        <path d="M26.500 16q6 6 6 9.500t-5 2.500l1 3.500h-4l1-3.500q-5 1-5-2.500t6-9.500z" fill="#ffe0a0" />
      </Slot>
      <Slot>
        <path d="M9 15Q8.500 1 18 1t9 14q5 6 5 12l-3-1q-3 7-11 7T7 26l-3 1q0-6 5-12z" fill="#080808" />
        <ellipse cx="18" cy="26" rx="8" ry="8" fill="#fff" />
        <ellipse cx="15.500" cy="8" rx="2" ry="3" fill="#fff" />
        <ellipse cx="20.500" cy="8" rx="2" ry="3" fill="#fff" />
        <ellipse cx="18" cy="13" rx="6" ry="2" fill="#ffa800" />
        <circle cx="16" cy="8.500" r=".8" />
        <circle cx="20" cy="8.500" r=".8" />
        <path d="M7 16q11 4 22 0l1 4q-6 3-13 2.500v3h-4.500v-4L6 20z" fill="#f01818" />
        <path d="M7 34q3-3 8-1l1 2H7zM20 34q5-4 10-1v2h-9z" fill="#ffa800" />
      </Slot>
      <Slot>
        <path d="M9 1q5 4 13 5 11 3 11 13 0 14-15.500 14T2 20Q2 10 11 7q-2-2-2-6z" fill="#3a94e0" />
        <ellipse cx="15" cy="24" rx="11" ry="8.500" fill="#8ad4ff" />
        <ellipse cx="19.500" cy="17" rx="1.500" ry="3.500" fill="#102040" />
        <ellipse cx="27" cy="16" rx="1.500" ry="3.500" fill="#102040" />
        <path d="M19 15.500v2M26.500 14.500v2" stroke="#fff" strokeWidth=".8" />
      </Slot>
      <Slot>
        <circle cx="18" cy="18" r="17.500" fill="#ffdc00" />
        <path d="M29 0q-1 6-7 8l-3 2 5 11q2 4 1 7-2 6-8 6-7-1-7-7.500 1-6 9-6L12 7q5-3 10-3.500 5-1 7-3.500z" fill="#10bc84" />
      </Slot>
      <Slot>
        <path d="M0 12 18 2l18 10v19H0z" fill="#fff" />
        <path d="M0 12h36l-14 8 7 7-16-8z" fill="#1b1f28" />
      </Slot>
      <Slot>
        <circle cx="18" cy="17" r="14" fill="#000" stroke="#f01818" strokeWidth="5" />
        <path d="m28 27 7-1v8H17v-4z" fill="#f01818" />
        <path d="m12 10 14 7-14 8z" fill="#1890ff" />
      </Slot>
      <Slot>
        <rect width="36" height="36" rx="4" fill="#f0f4ff" />
        <path d="M18 15Q23 5 32 3q-1 6-3 8l1 1q-2 6-5 8-1 6 1 12-4-5-8-6-7 1-11-3l4-1q-3-3-3-7-2-4-6-6 4-2 7 1z" fill="#6c8cf8" />
        <path d="M2 9q4-2 7 1l9 5-1 11q-6 0-10-3l4-1q-3-3-3-7-2-4-6-6z" fill="#58b0fc" />
        <path d="M22 22l3-1q-1 6 1 11-3-4-6-6z" fill="#a070e8" />
      </Slot>
      <div className="relative flex h-full w-[62px] items-center justify-center">
        <svg viewBox="0 0 50 60" className="h-[60px] w-[50px]">
          <path d="M7 12h18v18H7z" fill="#4484c4" />
          <path d="M25 12h18v18H25z" fill="#6ca868" />
          <path d="M7 30h18v18H7z" fill="#e0a070" />
          <path d="M25 30h18v18H25z" fill="#98a098" />
          <circle cx="25" cy="30" r="15" fill="#fff" opacity=".2" />
          <path d="M8 12h6l12 16-3 3z" fill="#c83040" />
          <circle cx="26" cy="30" r="4.500" fill="#d01818" />
          <path d="M0 40h50v17H0z" fill="#fff" opacity=".25" />
          <path d="M0 57h50v3H0z" fill="#76b9ed" />
          <path d="M26 31v17l4-4 3 6 3-2-3-5h6z" fill="#dcdcdc" stroke="#303030" />
        </svg>
      </div>
      <div className="mt-[3px] ml-[14px] flex h-[24px] w-[23px] items-center justify-center self-start bg-white text-[20px] leading-none text-black">拼</div>
      <div className="flex flex-1 items-center">
        <svg viewBox="0 0 120 30" className="ml-[20px] h-[30px] w-[120px]" fill="none" stroke="#fff" strokeWidth="1.700">
          <path d="m3 19 8.500-9 8.500 9" />
          <g strokeWidth="1.400">
            <path d="M40 25Q40 8 57 7" stroke="#888" />
            <path d="M44 25q1-12 13-13M49 25q1-7 8-8" />
          </g>
          <circle cx="56" cy="23.500" r="1.800" fill="#fff" stroke="none" />
          <path d="M73 11h4l5-5v18l-5-5h-4zM86 12q2 3 0 6M89 9q4 6 0 12" />
          <path d="M92 6q5 9 0 18" stroke="#888" />
        </svg>
        <span className="-ml-[15px] text-[24px] leading-none">英</span>
        <span className="ml-[20px] flex h-[24px] w-[23px] items-center justify-center bg-white text-[20px] leading-none text-black">拼</span>
        <div className="ml-[24px] flex w-[98px] flex-col items-center text-[18px] leading-[28px] tracking-[-0.2px]">
          <span>1:38</span>
          <span>2019/8/28</span>
        </div>
        <svg viewBox="0 0 26 26" className="ml-[26px] h-[26px] w-[26px]" fill="none" stroke="#fff" strokeWidth="1.700">
          <path d="M1 2h24v18h-9l-4 4-3-4H1z" />
        </svg>
      </div>
      <div className="mr-[6px] w-[2px] bg-[#6a6c72]" />
    </footer>
  )
}

export default function App() {
  return (
    <div className="flex h-[1080px] w-[1920px] flex-col overflow-hidden bg-[#fafafa] font-['Noto_Sans','Noto_Sans_CJK_SC',sans-serif]">
      <TitleBar />
      <main className="flex h-[917px] shrink-0 bg-black">
        <div className="flex w-[1583px] shrink-0 flex-col">
          <Toolbar />
          <PriceChart />
          <VolumePanel />
          <MacdPanel />
          <ChanPanel />
          <SkdjPanel />
          <TimeAxis />
          <IndicatorTabs />
        </div>
        <QuotePanel />
      </main>
      <div className="flex-1" />
      <StatusBar />
      <TaskBar />
    </div>
  )
}
